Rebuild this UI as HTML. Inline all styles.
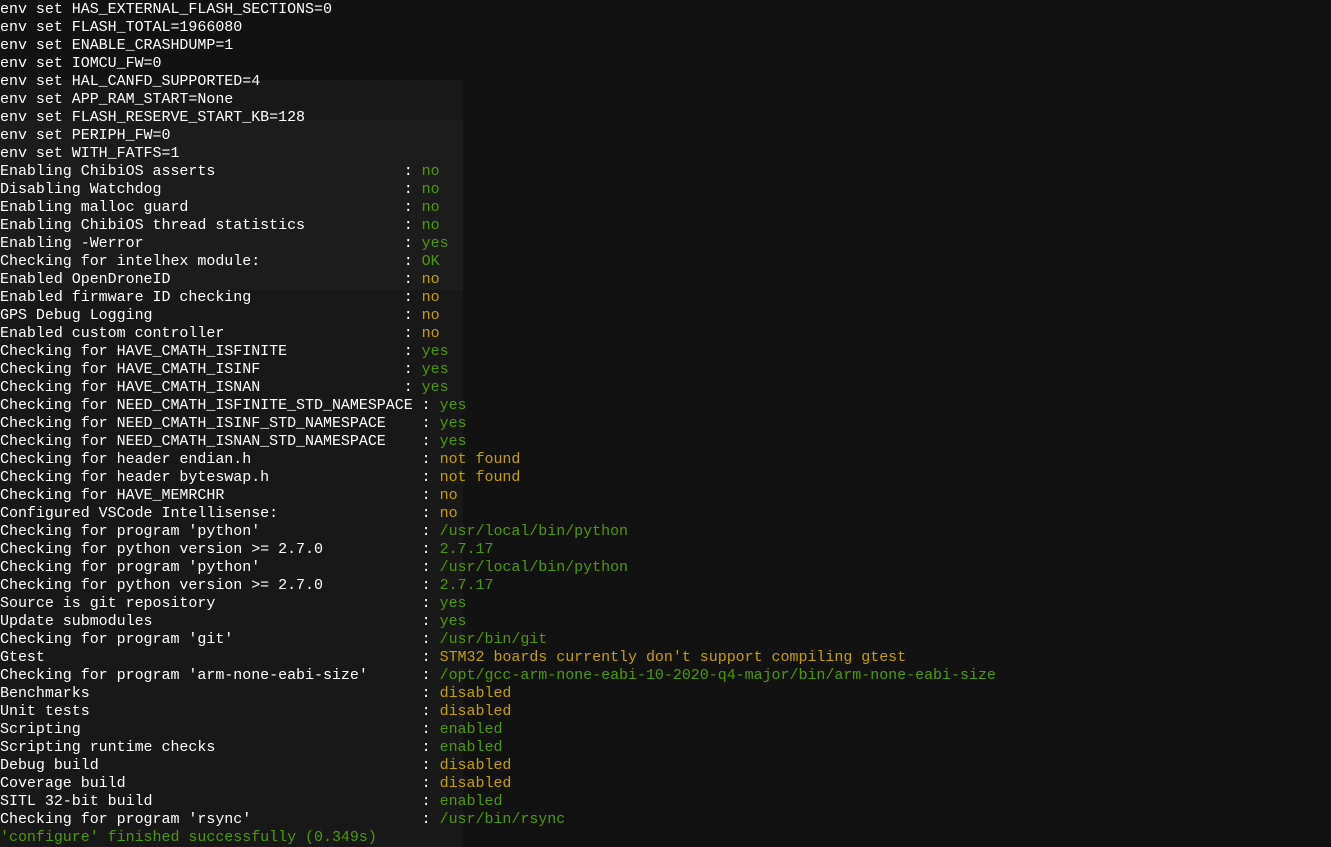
<!DOCTYPE html><html><head><meta charset="utf-8"><style>
body{margin:0;width:1331px;height:847px;background:#121212;overflow:hidden;position:relative}
.p{position:absolute;left:0;top:80px;width:463px;height:767px;background:#181818}
.p2{position:absolute;left:0;top:120px;width:463px;height:170px;background:#1c1c1c}
pre{position:absolute;left:0;top:1px;margin:0;font:15px/18px "Liberation Mono",monospace;color:#fff;letter-spacing:-0.03px}
.g{color:#4e9a06}.y{color:#c4a000}
</style></head><body><div class="p"></div><div class="p2"></div><pre>env set HAS_EXTERNAL_FLASH_SECTIONS=0
env set FLASH_TOTAL=1966080
env set ENABLE_CRASHDUMP=1
env set IOMCU_FW=0
env set HAL_CANFD_SUPPORTED=4
env set APP_RAM_START=None
env set FLASH_RESERVE_START_KB=128
env set PERIPH_FW=0
env set WITH_FATFS=1
Enabling ChibiOS asserts                     : <span class="g">no</span>
Disabling Watchdog                           : <span class="g">no</span>
Enabling malloc guard                        : <span class="g">no</span>
Enabling ChibiOS thread statistics           : <span class="g">no</span>
Enabling -Werror                             : <span class="g">yes</span>
Checking for intelhex module:                : <span class="g">OK</span>
Enabled OpenDroneID                          : <span class="y">no</span>
Enabled firmware ID checking                 : <span class="y">no</span>
GPS Debug Logging                            : <span class="y">no</span>
Enabled custom controller                    : <span class="y">no</span>
Checking for HAVE_CMATH_ISFINITE             : <span class="g">yes</span>
Checking for HAVE_CMATH_ISINF                : <span class="g">yes</span>
Checking for HAVE_CMATH_ISNAN                : <span class="g">yes</span>
Checking for NEED_CMATH_ISFINITE_STD_NAMESPACE : <span class="g">yes</span>
Checking for NEED_CMATH_ISINF_STD_NAMESPACE    : <span class="g">yes</span>
Checking for NEED_CMATH_ISNAN_STD_NAMESPACE    : <span class="g">yes</span>
Checking for header endian.h                   : <span class="y">not found</span>
Checking for header byteswap.h                 : <span class="y">not found</span>
Checking for HAVE_MEMRCHR                      : <span class="y">no</span>
Configured VSCode Intellisense:                : <span class="y">no</span>
Checking for program 'python'                  : <span class="g">/usr/local/bin/python</span>
Checking for python version >= 2.7.0           : <span class="g">2.7.17</span>
Checking for program 'python'                  : <span class="g">/usr/local/bin/python</span>
Checking for python version >= 2.7.0           : <span class="g">2.7.17</span>
Source is git repository                       : <span class="g">yes</span>
Update submodules                              : <span class="g">yes</span>
Checking for program 'git'                     : <span class="g">/usr/bin/git</span>
Gtest                                          : <span class="y">STM32 boards currently don't support compiling gtest</span>
Checking for program 'arm-none-eabi-size'      : <span class="g">/opt/gcc-arm-none-eabi-10-2020-q4-major/bin/arm-none-eabi-size</span>
Benchmarks                                     : <span class="y">disabled</span>
Unit tests                                     : <span class="y">disabled</span>
Scripting                                      : <span class="g">enabled</span>
Scripting runtime checks                       : <span class="g">enabled</span>
Debug build                                    : <span class="y">disabled</span>
Coverage build                                 : <span class="y">disabled</span>
SITL 32-bit build                              : <span class="g">enabled</span>
Checking for program 'rsync'                   : <span class="g">/usr/bin/rsync</span>
<span class="g">'configure' finished successfully (0.349s)</span></pre></body></html>
